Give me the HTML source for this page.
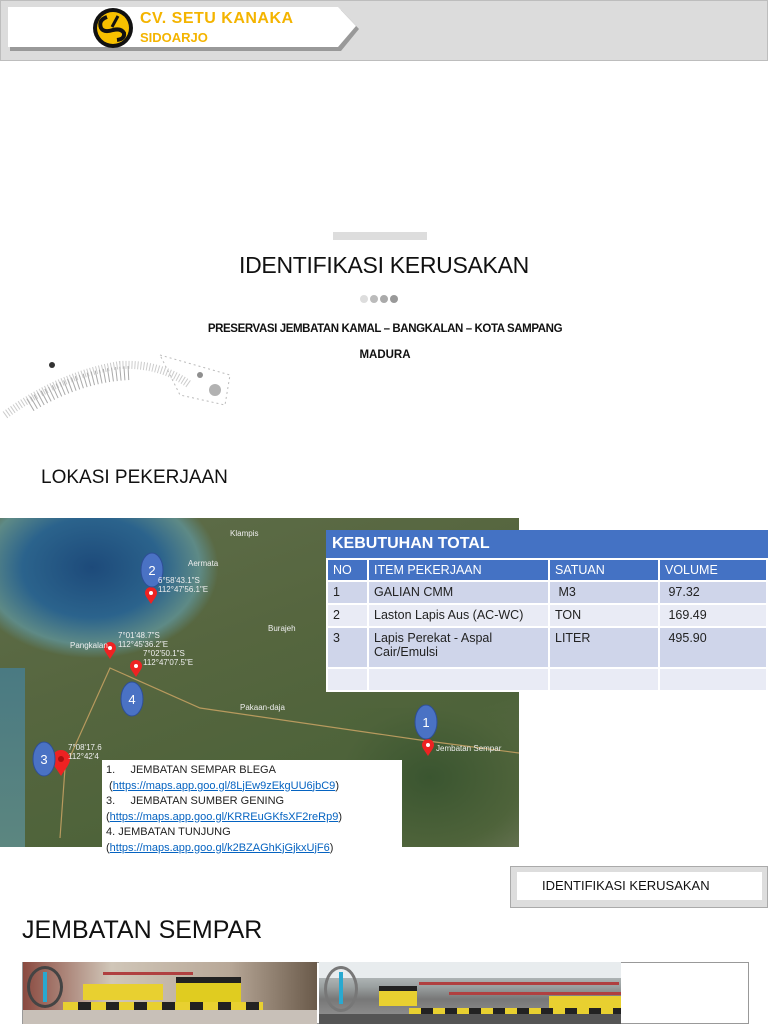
<!DOCTYPE html>
<html><head><meta charset="utf-8"><style>
*{margin:0;padding:0;box-sizing:border-box}
body{width:768px;height:1024px;overflow:hidden;background:#fff;font-family:"Liberation Sans",sans-serif;position:relative}
.abs{position:absolute}
table{border-collapse:collapse}
td{border:2px solid #fff;font-size:12.5px;color:#222;vertical-align:top;padding:3px 5px}
</style></head><body>
<div class="abs" style="left:0;top:0;width:768px;height:61px;background:#dcdcdc;border:1px solid #bdbdbd"></div>
<svg class="abs" style="left:0;top:0" width="400" height="60">
<polygon points="9,8 340,8 358,27 340,49 9,49" fill="#999" transform="translate(1,2)"/>
<polygon points="8,7 338,7 356,26 338,47 8,47" fill="#fff"/>
<circle cx="113" cy="28" r="20" fill="#111"/><circle cx="113" cy="28" r="16" fill="#f7c000"/>
<path d="M107 17 Q98 20 101 28 Q104 33 113 30 Q121 28 124 33 Q125 39 117 40" stroke="#111" stroke-width="4" fill="none"/>
<path d="M118 16 L112 27" stroke="#111" stroke-width="3"/>
</svg>
<div class="abs" style="left:140px;top:10px;color:#f4b400;font-weight:bold;font-size:16px;letter-spacing:.5px">CV. SETU KANAKA</div>
<div class="abs" style="left:140px;top:30px;color:#f4b400;font-weight:bold;font-size:13px">SIDOARJO</div>

<div class="abs" style="left:333px;top:232px;width:94px;height:8px;background:#ddd"></div>
<div class="abs" style="left:0;width:768px;top:252px;text-align:center;font-size:23px;color:#111;letter-spacing:-0.3px">IDENTIFIKASI KERUSAKAN</div>
<div class="abs" style="left:360px;top:290px">
<span style="display:inline-block;width:8px;height:8px;border-radius:50%;background:#ddd;margin-right:2px"></span><span style="display:inline-block;width:8px;height:8px;border-radius:50%;background:#bbb;margin-right:2px"></span><span style="display:inline-block;width:8px;height:8px;border-radius:50%;background:#aaa;margin-right:2px"></span><span style="display:inline-block;width:8px;height:8px;border-radius:50%;background:#999"></span></div>
<div class="abs" style="left:150px;width:470px;top:323px;text-align:center;font-size:11.5px;font-weight:bold;color:#111;letter-spacing:-0.4px;white-space:nowrap">PRESERVASI JEMBATAN KAMAL – BANGKALAN – KOTA SAMPANG</div>
<div class="abs" style="left:150px;width:470px;top:349px;text-align:center;font-size:11.5px;font-weight:bold;color:#111">MADURA</div>
<svg class="abs" style="left:0;top:335px" width="235" height="100">
<path d="M5 80 Q60 40 120 30 Q160 28 190 50" stroke="#ccc" stroke-width="8" fill="none" stroke-dasharray="1 2"/>
<path d="M30 70 Q80 40 130 38" stroke="#aaa" stroke-width="14" fill="none" stroke-dasharray="1 3"/>
<path d="M160 20 L230 40 L225 70 L180 60Z" fill="none" stroke="#bbb" stroke-dasharray="2 3"/>
<circle cx="215" cy="55" r="6" fill="#666" opacity=".5"/><circle cx="200" cy="40" r="3" fill="#444" opacity=".6"/><circle cx="52" cy="30" r="3" fill="#333"/>
</svg>
<div class="abs" style="left:41px;top:467px;font-size:19px;color:#111">LOKASI PEKERJAAN</div>

<div class="abs" style="left:0;top:518px;width:519px;height:329px;background:linear-gradient(160deg,#5f6e4a 0%,#56663f 40%,#4e633a 70%,#647150 100%);overflow:hidden">
<div class="abs" style="left:0;top:0;width:230px;height:165px;background:radial-gradient(ellipse 55% 55% at 40% 30%,#1d4a7a,#2b638c 55%,#5e8a86 85%,rgba(90,110,80,0) 100%)"></div>
<div class="abs" style="left:0;top:150px;width:25px;height:179px;background:linear-gradient(#4a7a82,#5c8680)"></div>
<div class="abs" style="left:340px;top:190px;width:179px;height:139px;background:radial-gradient(#3a5530,#4e633a 70%,rgba(0,0,0,0))"></div>
<svg class="abs" style="left:0;top:0" width="519" height="329">
<path d="M60 320 L65 250 L110 150 L200 190 L420 222 L519 235" stroke="#b89a5e" stroke-width="1.2" fill="none"/>
<g fill="#e22">
<path transform="translate(151,86)" d="M0 0 c-3 -5 -6 -8 -6 -11 a6 6 0 1 1 12 0 c0 3 -3 6 -6 11z"/>
<path transform="translate(110,141)" d="M0 0 c-3 -5 -6 -8 -6 -11 a6 6 0 1 1 12 0 c0 3 -3 6 -6 11z"/>
<path transform="translate(136,159)" d="M0 0 c-3 -5 -6 -8 -6 -11 a6 6 0 1 1 12 0 c0 3 -3 6 -6 11z"/>
<path transform="translate(428,238)" d="M0 0 c-3 -5 -6 -8 -6 -11 a6 6 0 1 1 12 0 c0 3 -3 6 -6 11z"/>
<path transform="translate(61,258)" d="M0 0 c-5 -8 -9 -12 -9 -17 a9 9 0 1 1 18 0 c0 5 -4 9 -9 17z"/></g>
<g fill="#fff"><circle cx="151" cy="75" r="2"/><circle cx="110" cy="130" r="2"/><circle cx="136" cy="148" r="2"/><circle cx="428" cy="227" r="2"/></g>
<circle cx="61" cy="241" r="3" fill="#a11"/>
<g fill="#4a72c4" stroke="#2e4f96"><ellipse cx="152" cy="52" rx="11" ry="17"/><ellipse cx="132" cy="181" rx="11" ry="17"/><ellipse cx="426" cy="204" rx="11" ry="17"/><ellipse cx="44" cy="241" rx="11" ry="17"/></g>
<g fill="#fff" font-size="13" font-family="Liberation Sans" text-anchor="middle"><text x="152" y="57">2</text><text x="132" y="186">4</text><text x="426" y="209">1</text><text x="44" y="246">3</text></g>
<g fill="#eee" font-size="8" font-family="Liberation Sans"><text x="158" y="65">6°58'43.1"S</text><text x="158" y="74">112°47'56.1"E</text><text x="118" y="120">7°01'48.7"S</text><text x="118" y="129">112°45'36.2"E</text><text x="143" y="138">7°02'50.1"S</text><text x="143" y="147">112°47'07.5"E</text><text x="436" y="233">Jembatan Sempar</text><text x="68" y="232">7°08'17.6</text><text x="68" y="241">112°42'4</text><text x="240" y="192">Pakaan-daja</text><text x="188" y="48">Aermata</text><text x="268" y="113">Burajeh</text><text x="230" y="18">Klampis</text><text x="70" y="130">Pangkalan</text></g>
</svg>
</div>
<div class="abs" style="left:326px;top:530px;width:442px;height:162px">
<div style="background:#4472c4;color:#fff;font-weight:bold;font-size:16px;height:28px;padding:5px 6px">KEBUTUHAN TOTAL</div>
<table style="width:442px">
<tr style="background:#4472c4;height:22px"><td style="width:41px;color:#fff">NO</td><td style="width:181px;color:#fff">ITEM PEKERJAAN</td><td style="width:110px;color:#fff">SATUAN</td><td style="color:#fff">VOLUME</td></tr>
<tr style="background:#cfd5ea;height:23px"><td>1</td><td>GALIAN CMM</td><td>&nbsp;M3</td><td>&nbsp;97.32</td></tr>
<tr style="background:#e9ebf5;height:23px"><td>2</td><td>Laston Lapis Aus (AC-WC)</td><td>TON</td><td>&nbsp;169.49</td></tr>
<tr style="background:#cfd5ea;height:41px"><td>3</td><td>Lapis Perekat - Aspal Cair/Emulsi</td><td>LITER</td><td>&nbsp;495.90</td></tr>
<tr style="background:#e9ebf5;height:23px"><td></td><td></td><td></td><td></td></tr>
</table></div>
<div class="abs" style="left:102px;top:760px;width:300px;height:87px;background:#fff;font-size:11px;color:#222;line-height:15.5px;padding:3px 0 0 4px">
1.&nbsp;&nbsp;&nbsp;&nbsp; JEMBATAN SEMPAR BLEGA<br>&nbsp;(<span style="color:#0563c1;text-decoration:underline">https://maps.app.goo.gl/8LjEw9zEkgUU6jbC9</span>)<br>
3.&nbsp;&nbsp;&nbsp;&nbsp; JEMBATAN SUMBER GENING<br>(<span style="color:#0563c1;text-decoration:underline">https://maps.app.goo.gl/KRREuGKfsXF2reRp9</span>)<br>
4. JEMBATAN TUNJUNG<br>(<span style="color:#0563c1;text-decoration:underline">https://maps.app.goo.gl/k2BZAGhKjGjkxUjF6</span>)</div>

<div class="abs" style="left:510px;top:866px;width:258px;height:42px;background:#ddd;border:1px solid #aaa"></div>
<div class="abs" style="left:517px;top:872px;width:245px;height:28px;background:#fff;font-size:13px;color:#111;padding:6px 0 0 25px">IDENTIFIKASI KERUSAKAN</div>
<div class="abs" style="left:22px;top:916px;font-size:25px;color:#111">JEMBATAN SEMPAR</div>
<div class="abs" style="left:22px;top:962px;width:727px;height:62px;border:1px solid #999;background:#fff"></div>
<div class="abs" style="left:23px;top:962px;width:294px;height:62px;background:linear-gradient(90deg,#8a4a40,#d0c6b8 30%,#b8a898 70%,#6a5a4a);overflow:hidden">
<div class="abs" style="left:60px;top:22px;width:80px;height:16px;background:#e8d030"></div>
<div class="abs" style="left:153px;top:15px;width:65px;height:26px;background:#e0cc20;border-top:6px solid #222"></div>
<div class="abs" style="left:80px;top:10px;width:90px;height:3px;background:#b04040"></div>
<div class="abs" style="left:40px;top:40px;width:200px;height:8px;background:repeating-linear-gradient(90deg,#e8d030 0 15px,#222 15px 28px)"></div>
<div class="abs" style="left:0;top:48px;width:294px;height:14px;background:#c8c0b8"></div>
<div class="abs" style="left:4px;top:4px;width:36px;height:42px;border-radius:50%;border:3px solid #444"></div>
<div class="abs" style="left:20px;top:10px;width:4px;height:30px;background:#29a9d0"></div>
</div>
<div class="abs" style="left:319px;top:962px;width:302px;height:62px;background:linear-gradient(#d0d6d8,#9aa0a0 40%,#777 60%,#999);overflow:hidden">
<div class="abs" style="left:0;top:0;width:302px;height:16px;background:#e8ecee"></div>
<div class="abs" style="left:60px;top:24px;width:38px;height:20px;background:#e8d030;border-top:5px solid #222"></div>
<div class="abs" style="left:100px;top:20px;width:200px;height:3px;background:#b04040"></div>
<div class="abs" style="left:130px;top:30px;width:172px;height:3px;background:#b04040"></div>
<div class="abs" style="left:230px;top:34px;width:72px;height:14px;background:#e8d030"></div>
<div class="abs" style="left:90px;top:46px;width:212px;height:6px;background:repeating-linear-gradient(90deg,#e8d030 0 12px,#222 12px 24px)"></div>
<div class="abs" style="left:0;top:52px;width:302px;height:10px;background:#555"></div>
<div class="abs" style="left:5px;top:4px;width:34px;height:46px;border-radius:50%;border:3px solid #777"></div>
<div class="abs" style="left:20px;top:10px;width:4px;height:32px;background:#29a9d0"></div>
</div>
</body></html>
